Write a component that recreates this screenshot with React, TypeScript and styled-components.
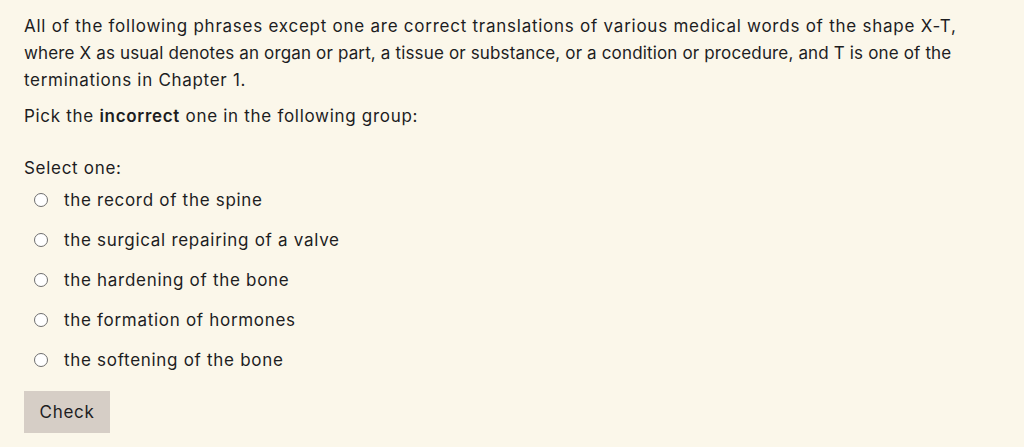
import styled, { createGlobalStyle } from "styled-components";

const GlobalStyle = createGlobalStyle`
  html, body {
    margin: 0;
    padding: 0;
    background: #fbf7ea;
  }
  body {
    font-family: Inter, "Noto Sans", sans-serif;
    color: #1d1d1f;
  }
`;

const options = [
  "the record of the spine",
  "the surgical repairing of a valve",
  "the hardening of the bone",
  "the formation of hormones",
  "the softening of the bone",
];

const App = () => {
  return (
    <Page>
      <GlobalStyle />
      <QuestionText>
        <Para>
          <Line $spacing={0.75}>
            All of the following phrases except one are correct translations of various medical words of
            the shape X-T,
          </Line>
          <Line $spacing={0.15}>
            where X as usual denotes an organ or part, a tissue or substance, or a condition or procedure,
            and T is one of the
          </Line>
          <Line $spacing={0.7}>terminations in Chapter 1.</Line>
        </Para>
        <Para>
          Pick the <strong>incorrect</strong> one in the following group:
        </Para>
      </QuestionText>
      <Prompt>Select one:</Prompt>
      <OptionList>
        {options.map((o) => (
          <OptionRow key={o}>
            <Radio />
            <OptionLabel>{o}</OptionLabel>
          </OptionRow>
        ))}
      </OptionList>
      <CheckButton>Check</CheckButton>
    </Page>
  );
};

const Page = styled.div`
  width: 1024px;
  height: 447px;
  box-sizing: border-box;
  padding: 13px 24px 0 24px;
  background: #fbf7ea;
  font-size: 17px;
  letter-spacing: 0.7px;
  overflow: hidden;
`;
const QuestionText = styled.div`
  width: 980px;
  white-space: nowrap;
`;
const Para = styled.div`
  margin: 0 0 9px 0;
  line-height: 27px;
  strong {
    font-weight: 600;
  }
`;
const Line = styled.div<{ $spacing: number }>`
  letter-spacing: ${(p) => p.$spacing}px;
`;
const Prompt = styled.div`
  margin-top: 25px;
  line-height: 27px;
`;
const OptionList = styled.div`
  display: flex;
  flex-direction: column;
  margin-top: -2px;
`;
const OptionRow = styled.label`
  display: flex;
  align-items: center;
  height: 40px;
  padding-left: 10px;
  gap: 16px;
`;
const Radio = styled.span`
  width: 12px;
  height: 12px;
  border-radius: 50%;
  border: 1.5px solid #6e6e6e;
  background: #fff;
  flex-shrink: 0;
`;
const OptionLabel = styled.span`
  line-height: 27px;
`;
const CheckButton = styled.button`
  margin-top: 11px;
  width: 86px;
  height: 42px;
  border: none;
  background: #d6cec6;
  color: #1d1d1f;
  font-family: Inter, "Noto Sans", sans-serif;
  font-size: 17px;
  letter-spacing: 0.7px;
  padding: 0;
`;

export default App;
